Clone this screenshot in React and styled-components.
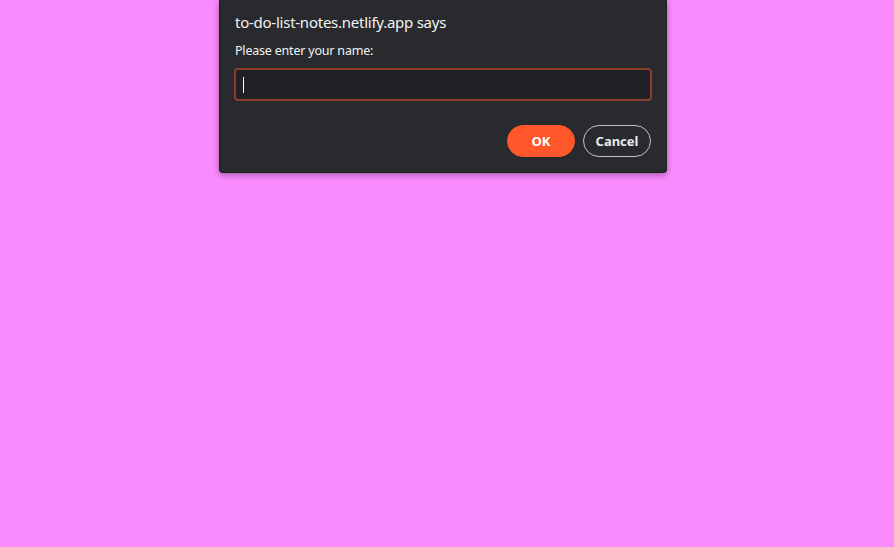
import React from "react";
import styled, { createGlobalStyle } from "styled-components";

const GlobalStyle = createGlobalStyle`
  html, body {
    margin: 0;
    padding: 0;
    height: 100%;
    background: #f98bff;
  }
  #root {
    height: 100%;
  }
`;

const Page = styled.div`
  width: 100%;
  height: 100%;
  display: flex;
  justify-content: center;
  align-items: flex-start;
  font-family: "Segoe UI", "Noto Sans", "Open Sans", sans-serif;
`;

const Dialog = styled.div`
  width: 448px;
  box-sizing: border-box;
  padding: 10px 15px 15px;
  background: #292a2d;
  border: 1px solid #1c1f1c;
  border-top: none;
  border-radius: 0 0 4px 4px;
  box-shadow: 0 2px 6px rgba(0, 0, 0, 0.35);
  color: #f1f3f4;
  margin-left: -8px;
`;

const Title = styled.div`
  font-size: 15px;
  line-height: 24px;
  letter-spacing: -0.25px;
`;

const Message = styled.div`
  font-size: 12.5px;
  line-height: 18px;
  margin-top: 8px;
  letter-spacing: -0.2px;
`;

const Field = styled.div`
  margin: 8px -1px 0;
  height: 33px;
  box-sizing: border-box;
  border: 2px solid #8a3f2c;
  border-radius: 4px;
  background: #202124;
  display: flex;
  align-items: center;
  padding-left: 7px;
`;

const Caret = styled.span`
  width: 1px;
  height: 16px;
  background: #ffffff;
`;

const Actions = styled.div`
  display: flex;
  justify-content: flex-end;
  gap: 8px;
  margin-top: 24px;
`;

const Button = styled.button`
  width: 68px;
  height: 32px;
  border-radius: 16px;
  font-family: inherit;
  font-size: 13px;
  font-weight: 700;
  cursor: pointer;
  color: ${(p) => (p.$primary ? "#ffffff" : "#e8eaed")};
  background: ${(p) => (p.$primary ? "#ff5729" : "transparent")};
  border: 1px solid ${(p) => (p.$primary ? "#ff5729" : "#bdc1c6")};
`;

export default function App() {
  return (
    <>
      <GlobalStyle />
      <Page>
        <Dialog>
          <Title>to-do-list-notes.netlify.app says</Title>
          <Message>Please enter your name:</Message>
          <Field>
            <Caret />
          </Field>
          <Actions>
            <Button $primary>OK</Button>
            <Button>Cancel</Button>
          </Actions>
        </Dialog>
      </Page>
    </>
  );
}
